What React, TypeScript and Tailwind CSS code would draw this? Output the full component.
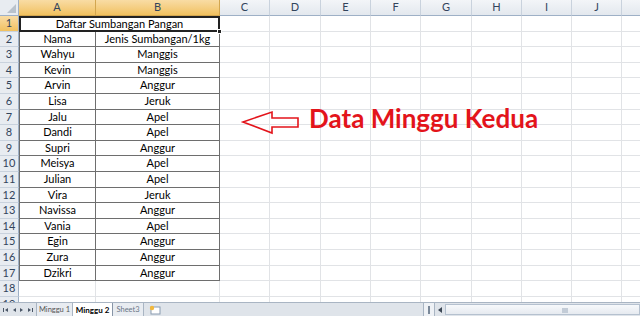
import React from "react";

const rows: [string, string][] = [
  ["Nama", "Jenis Sumbangan/1kg"],
  ["Wahyu", "Manggis"],
  ["Kevin", "Manggis"],
  ["Arvin", "Anggur"],
  ["Lisa", "Jeruk"],
  ["Jalu", "Apel"],
  ["Dandi", "Apel"],
  ["Supri", "Anggur"],
  ["Meisya", "Apel"],
  ["Julian", "Apel"],
  ["Vira", "Jeruk"],
  ["Navissa", "Anggur"],
  ["Vania", "Apel"],
  ["Egin", "Anggur"],
  ["Zura", "Anggur"],
  ["Dzikri", "Anggur"],
];

const restCols = [
  { name: "C", w: 50 },
  { name: "D", w: 51 },
  { name: "E", w: 50 },
  { name: "F", w: 50 },
  { name: "G", w: 51 },
  { name: "H", w: 50 },
  { name: "I", w: 50 },
  { name: "J", w: 50 },
  { name: "", w: 50 },
];

const RowHeader = ({ n, active }: { n: number; active?: boolean }) => (
  <div
    className={
      "flex w-[19px] flex-shrink-0 items-center justify-center border-r border-b border-r-[#9eb0c6] border-b-[#c9d2dd] text-[11px] text-[#32445c] " +
      (active ? "bg-gradient-to-b from-[#f9dca4] to-[#f1c15e]" : "bg-[#e8ecf1]")
    }
  >
    {n}
  </div>
);

const EmptyCells = () => (
  <>
    {restCols.map((c, i) => (
      <div
        key={i}
        style={{ width: c.w }}
        className="flex-shrink-0 border-r border-b border-[#e1e3e6]"
      />
    ))}
  </>
);

export default function App() {
  return (
    <div className="relative flex h-[316px] w-[640px] flex-col overflow-hidden bg-white font-['Lato','Liberation_Sans',sans-serif]">
      <div className="relative flex-1 overflow-hidden">
        {/* column headers */}
        <div className="flex h-[16px] text-[11px] text-[#32445c]">
          <div className="relative w-[19px] flex-shrink-0 border-r border-b border-[#9eb0c6] bg-[#e8ecf1]">
            <div className="absolute right-[2px] bottom-[2px] h-0 w-0 border-b-[9px] border-l-[9px] border-b-[#b9c2cc] border-l-transparent" />
          </div>
          <div className="flex w-[77px] flex-shrink-0 items-center justify-center border-r border-b border-r-[#d3a64f] border-b-[#d3a64f] bg-gradient-to-b from-[#f9dca4] to-[#f1c15e]">
            A
          </div>
          <div className="flex w-[124px] flex-shrink-0 items-center justify-center border-r border-b border-r-[#d3a64f] border-b-[#d3a64f] bg-gradient-to-b from-[#f9dca4] to-[#f1c15e]">
            B
          </div>
          {restCols.map((c, i) => (
            <div
              key={i}
              style={{ width: c.w }}
              className="flex flex-shrink-0 items-center justify-center border-r border-b border-r-[#c9d2dd] border-b-[#9eb0c6] bg-gradient-to-b from-[#f3f5f8] to-[#e3e8ee]"
            >
              {c.name}
            </div>
          ))}
        </div>

        {/* row 1 */}
        <div className="flex h-[15.6px] text-[11px] text-black">
          <RowHeader n={1} active />
          <div className="relative flex w-[201px] flex-shrink-0 items-center justify-center border-2 border-[#222]">
            Daftar Sumbangan Pangan
            <div className="absolute right-[-4px] bottom-[-4px] h-[5px] w-[5px] border border-white bg-[#222]" />
          </div>
          <EmptyCells />
        </div>

        {rows.map(([a, b], i) => (
          <div key={i} className="flex h-[15.6px] text-[11px] text-black">
            <RowHeader n={i + 2} />
            <div className="flex w-[77px] flex-shrink-0 items-center justify-center border-r border-b border-l border-[#6e6e6e]">
              {a}
            </div>
            <div className="flex w-[124px] flex-shrink-0 items-center justify-center border-r border-b border-[#6e6e6e]">
              {b}
            </div>
            <EmptyCells />
          </div>
        ))}

        {[18, 19].map((n) => (
          <div key={n} className="flex h-[15.6px]">
            <RowHeader n={n} />
            <div className="w-[77px] flex-shrink-0 border-r border-b border-[#e1e3e6]" />
            <div className="w-[124px] flex-shrink-0 border-r border-b border-[#e1e3e6]" />
            <EmptyCells />
          </div>
        ))}

        {/* annotation */}
        <svg className="absolute top-[108px] left-[240px]" width="62" height="28" viewBox="0 0 62 28">
          <polygon
            points="3,14 32,4 32,10 58,10 58,19 32,19 32,25"
            fill="none"
            stroke="#e3141b"
            strokeWidth="1.6"
            strokeLinejoin="miter"
          />
        </svg>
        <div className="absolute top-[103px] left-[309px] text-[26px] leading-[30px] font-bold text-[#e3141b]">
          Data Minggu Kedua
        </div>
      </div>

      {/* sheet tab bar */}
      <div className="flex h-[14px] flex-shrink-0 items-stretch border-t border-[#a9b5c3] bg-[#dfe4ea] text-[7.5px] whitespace-nowrap text-[#333]">
        <div className="flex w-[36px] flex-shrink-0 items-center justify-around px-[2px] text-[#4a5666]">
          <svg width="6" height="6" viewBox="0 0 6 6"><rect x="0" y="1" width="1" height="4" fill="currentColor" /><polygon points="5,1 2,3 5,5" fill="currentColor" /></svg>
          <svg width="5" height="6" viewBox="0 0 5 6"><polygon points="4,1 1,3 4,5" fill="currentColor" /></svg>
          <svg width="5" height="6" viewBox="0 0 5 6"><polygon points="1,1 4,3 1,5" fill="currentColor" /></svg>
          <svg width="6" height="6" viewBox="0 0 6 6"><polygon points="1,1 4,3 1,5" fill="currentColor" /><rect x="5" y="1" width="1" height="4" fill="currentColor" /></svg>
        </div>
        <div className="flex w-[37px] flex-shrink-0 items-center justify-center border-x border-[#a9b5c3] bg-[#e8ecf1] text-[#555]">Minggu 1</div>
        <div className="flex w-[40px] flex-shrink-0 items-center justify-center border-r border-[#8795a7] bg-white text-[8px] font-bold text-black">Minggu 2</div>
        <div className="flex w-[31px] flex-shrink-0 items-center justify-center border-r border-[#a9b5c3] bg-[#e8ecf1] text-[#6a7586]">Sheet3</div>
        <div className="flex items-center px-[5px]">
          <svg width="12" height="10" viewBox="0 0 12 10">
            <rect x="2" y="2" width="9" height="7" fill="#fff" stroke="#8a9bb0" strokeWidth="1" />
            <circle cx="3" cy="3" r="2.2" fill="#f2b83c" />
          </svg>
        </div>
        <div className="flex-1" />
        <div className="flex w-[12px] items-center justify-center border-x border-[#a9b5c3] bg-[#eef1f5]">
          <div className="h-[8px] w-[2px] bg-[#7a8899]" />
        </div>
        <div className="flex w-[10px] items-center justify-center">
          <svg width="5" height="6" viewBox="0 0 5 6"><polygon points="4,0 0,3 4,6" fill="#3d4856" /></svg>
        </div>
        <div className="relative my-[1px] w-[195px] border border-[#b5c1cf] bg-gradient-to-b from-[#f7f9fb] to-[#e6eaf0]">
          <div className="absolute top-[3px] left-[116px] h-[5px] w-[6px] bg-[#c3ccd7]" />
        </div>
      </div>
    </div>
  );
}
